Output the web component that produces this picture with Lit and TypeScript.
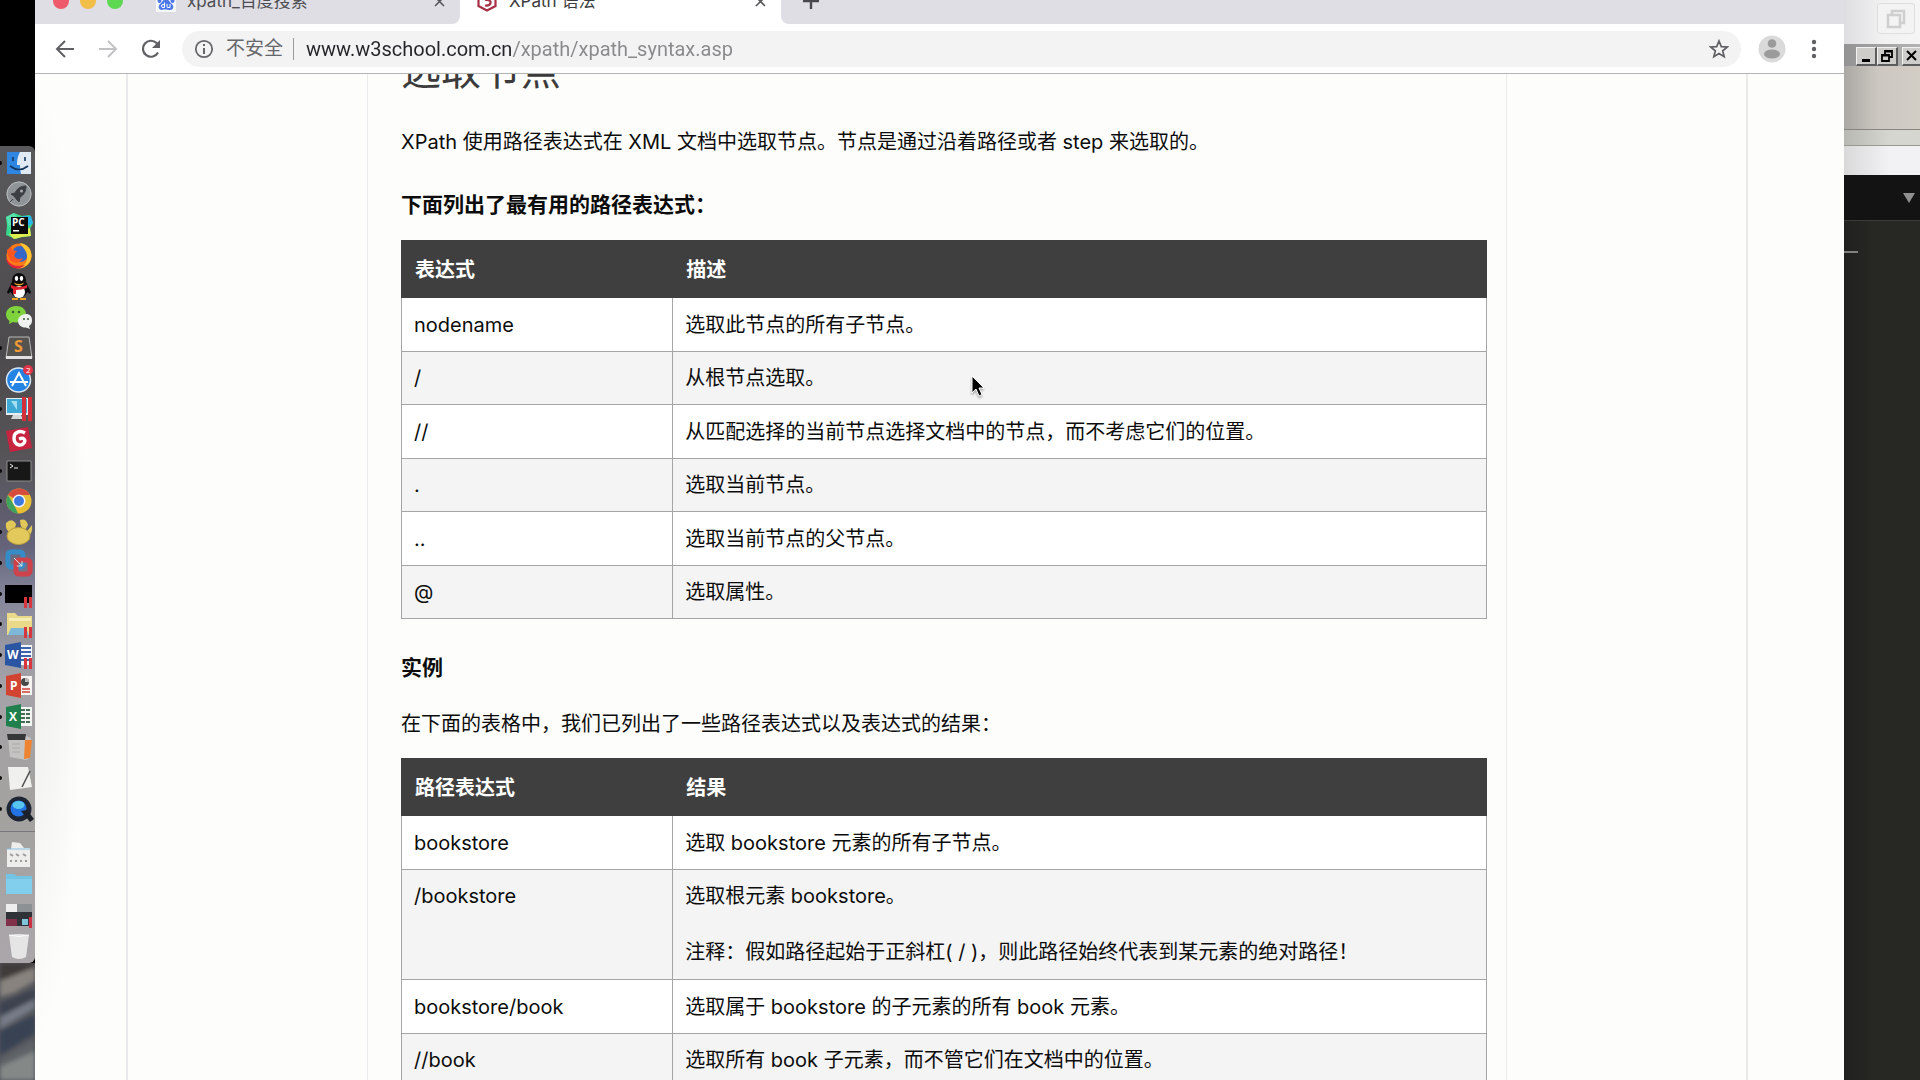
import { LitElement, html, css, svg, nothing } from "lit";
import { customElement } from "lit/decorators.js";

type Row = { expression: string; lines: string[] };

const expressionRows: Row[] = [
  { expression: "nodename", lines: ["选取此节点的所有子节点。"] },
  { expression: "/", lines: ["从根节点选取。"] },
  { expression: "//", lines: ["从匹配选择的当前节点选择文档中的节点，而不考虑它们的位置。"] },
  { expression: ".", lines: ["选取当前节点。"] },
  { expression: "..", lines: ["选取当前节点的父节点。"] },
  { expression: "@", lines: ["选取属性。"] },
];

const exampleRows: Row[] = [
  { expression: "bookstore", lines: ["选取 bookstore 元素的所有子节点。"] },
  {
    expression: "/bookstore",
    lines: ["选取根元素 bookstore。", "注释：假如路径起始于正斜杠( / )，则此路径始终代表到某元素的绝对路径！"],
  },
  { expression: "bookstore/book", lines: ["选取属于 bookstore 的子元素的所有 book 元素。"] },
  { expression: "//book", lines: ["选取所有 book 子元素，而不管它们在文档中的位置。"] },
];

const pause = svg`<path d="M20 18h3v11h-3zM25 18h3v11h-3z" fill="#d8353c"/>`;

/* Each icon is drawn in a 30 x 30 box. */
const dockIcons = [
  { name: "访达", open: true, art: svg`<path d="M3 4h24v22H3z" fill="#2f86e0"/><path d="M16 4h11v22H17c-1-4-1-7-1-9h-3c0-6 1-9 3-13z" fill="#dfeaf5"/><path d="M9 9v4M21 9v4M6 18q9 7 18 0" fill="none" stroke="#14375f" stroke-width="1.6"/>` },
  { name: "启动台", art: svg`<circle cx="15" cy="15" r="12.500" fill="#8f9499"/><circle cx="15" cy="15" r="12" fill="none" stroke="#b5b9bc"/><path d="M22 7c-6 0-9 3-11 7l-4 1 3 2 3 4 2 2 1-5c4-2 6-6 6-11zM9 20l-3 3" fill="#3c4045" stroke="#3c4045"/><circle cx="17.500" cy="12" r="1.500" fill="#a9adb0"/>` },
  { name: "PyCharm", art: svg`<path d="M2 7l8-4 8 3 8-1 3 8-3 6 1 7-9 1-7 2-9-4 1-9z" fill="#37d98c"/><path d="M2 7l8-4 4 6-9 8z" fill="#58dfae"/><path d="M18 6l9 0 2 7-4 3z" fill="#29b6e8"/><path d="M26 18l1 8-9 1-8 2-5-5z" fill="#dff04e"/><path d="M7 7h17v17H7z" fill="#0a0a0a"/><path d="M9 20h6v1.500H9z" fill="#fff"/><text x="8" y="16" font-size="10" font-weight="700" fill="#fff">PC</text>` },
  { name: "Firefox", art: svg`<circle cx="15" cy="15" r="12.500" fill="#ff7b17"/><circle cx="16" cy="13" r="8" fill="#3567c9"/><path d="M16 2c9 1 13 9 11 16-2 6-8 10-14 9 7-1 11-6 10-12 0-5-4-8-7-13z" fill="#ffc531"/><path d="M3 9l4-3 1 3 5 1-3 4c1 4 5 5 9 3-3 6-11 6-14 0-1-3-2-5-2-8z" fill="#ff571f"/><path d="M2 16c2 6 7 9 13 9l6-1c-3 3-7 4-11 3-5-2-8-6-8-11z" fill="#e2253c"/>` },
  { name: "QQ", art: svg`<ellipse cx="15" cy="17" rx="9" ry="10" fill="#0c0c0e"/><circle cx="15" cy="9" r="7" fill="#0c0c0e"/><path d="M6 15l-3 6 1 2 4-3zM24 15l3 6-1 2-4-3z" fill="#0c0c0e"/><ellipse cx="15" cy="21" rx="6" ry="6" fill="#fff"/><ellipse cx="12.500" cy="7.500" rx="1.700" ry="2.400" fill="#fff"/><ellipse cx="17.500" cy="7.500" rx="1.700" ry="2.400" fill="#fff"/><path d="M10 11.500q5 3 10 0-1 3-5 3t-5-3zM8 27h6v2H8zM16 27h6v2h-6z" fill="#f0a51e"/><path d="M7 14q8 4 16 0v3q-5 2-11 2v4H9v-5l-2-1z" fill="#e02430"/>` },
  { name: "微信", art: svg`<path d="M12 4C6 4 2 8 2 12.500c0 3 1.500 5 3.500 6.500L5 22l4-2c7 2 13-2 13-7.500S18 4 12 4z" fill="#7fd43e"/><path d="M22 12c-4 0-8 3-8 7s4 7 8 6.500l4 1.500-1-3c2-1 3-3 3-5.500 0-4-2-6.500-6-6.500z" fill="#eef1ef"/><g fill="#3d5b35"><circle cx="9" cy="10" r="1.300"/><circle cx="15" cy="10" r="1.300"/><circle cx="20" cy="17" r="1"/><circle cx="24" cy="17" r="1"/></g>` },
  { name: "Sublime Text", open: true, art: svg`<path d="M5 4h20l3 21H2z" fill="#55534f" stroke="#b9b9b9"/><path d="M2 23h26v3H2z" fill="#e1e1e1"/><text x="10" y="19" font-size="16" font-weight="700" fill="#f29a35">S</text>` },
  { name: "App Store", art: svg`<circle cx="14.500" cy="16" r="12" fill="#2484e4" stroke="#d9e7f3" stroke-width="1.500"/><path d="M8 22l7-13 7 13M6 18h18" fill="none" stroke="#fff" stroke-width="2"/><circle cx="24" cy="6" r="5" fill="#de3448"/><text x="22" y="9" font-size="8" fill="#fff">2</text>` },
  { name: "虚拟机", open: true, art: svg`<path d="M2 4h24v17H2z" fill="#e7edf0"/><path d="M3 5h20v14H3z" fill="#3fa9d5"/><path d="M7 7l6 9V7z" fill="#a3dff1"/><path d="M9 21h8l2 4H7z" fill="#d4d7d8"/><path d="M18 3h4v24h-4zM24 3h4v24h-4z" fill="#d4303a"/>` },
  { name: "网易", art: svg`<path d="M2 6l22-4 4 21-22 4z" fill="#c7253f"/><path d="M21 8c-5-3-11-1-11 5 0 7 7 9 10 5 2-3 0-6-5-4" fill="none" stroke="#fff" stroke-width="3.400"/>` },
  { name: "终端", open: true, art: svg`<path d="M3 5h24v20H3z" fill="#171717" stroke="#8c8c8c"/><path d="M6 8l3 2-3 2M10 12h4" fill="none" stroke="#eee"/>` },
  { name: "Chrome", open: true, art: svg`<circle cx="15" cy="15" r="12.500" fill="#e8be33"/><path d="M15 15L4 9a12.500 12.500 0 0 1 22 0H15z" fill="#d84c3e"/><path d="M4 9l7 12 3 6.500A12.500 12.500 0 0 1 4 9z" fill="#3ea45d"/><circle cx="15" cy="15" r="6.500" fill="#f4f4f4"/><circle cx="15" cy="15" r="5" fill="#3d79df"/>` },
  { name: "Navicat", open: true, art: svg`<path d="M2 6q6-6 10 1 0 5-7 8-4-3-3-9zM16 3q6-2 8 5l-3 5q-5-2-5-10zM28 8q1 8-4 12l-3-3z" fill="#e0c758"/><ellipse cx="14.500" cy="19" rx="11.500" ry="8.500" fill="#e3c95b" stroke="#b99e3b"/>` },
  { name: "VMware", open: true, art: svg`<rect x="4" y="4" width="15" height="15" rx="3" fill="none" stroke="#358cc6" stroke-width="5"/><rect x="12" y="12" width="14" height="14" rx="3" fill="none" stroke="#ce424b" stroke-width="5"/><path d="M10 10l8 8M18 13v5h-5" fill="none" stroke="#ddd"/>` },
  { name: "命令行", open: true, art: svg`<path d="M1 6h27v18H1z" fill="#000"/>${pause}` },
  { name: "文件资源", open: true, art: svg`<path d="M3 4h8l3 3h14v19H3z" fill="#ebd98a"/><path d="M5 9h22v3H5z" fill="#f6edb6"/><path d="M7 19h15l3 7H4z" fill="#7eb8d8"/>${pause}` },
  { name: "Word", open: true, art: svg`<path d="M14 5h14v20H14z" fill="#f3f6fb"/><path d="M16 8h11M16 12h11M16 16h11M16 20h11" stroke="#3d63ad" stroke-width="2"/><path d="M1 5l16-3v26L1 25z" fill="#2a55a2"/><text x="3" y="19" font-size="12" font-weight="700" fill="#fff">W</text>${pause}` },
  { name: "PowerPoint", open: true, art: svg`<path d="M14 5h14v19H14z" fill="#f6f3f2"/><circle cx="21" cy="11" r="4" fill="#474747"/><path d="M21 11V7a4 4 0 0 1 4 4z" fill="#bbb"/><path d="M18 18h8M18 21h8" stroke="#cf4436" stroke-width="1.500"/><path d="M2 5l15-3v25L2 24z" fill="#d24432"/><text x="6" y="19" font-size="12" font-weight="700" fill="#fff">P</text>` },
  { name: "Excel", open: true, art: svg`<path d="M14 5h14v19H14z" fill="#f2f6f3"/><path d="M17 8h9M17 12h9M17 16h9M17 20h9" stroke="#456c52" stroke-width="2" stroke-dasharray="4 1"/><path d="M2 5l15-3v25L2 24z" fill="#20804d"/><text x="5" y="19" font-size="12" font-weight="700" fill="#fff">X</text>` },
  { name: "计算器", open: true, art: svg`<path d="M4 4h18l5 2-1 20-4 2-16-3z" fill="#c4c3c1"/><path d="M21 8h7l-2 18-6 1z" fill="#ed8431"/><path d="M3 2h19l-1 6H4z" fill="#353638"/><path d="M8 12h8M8 16h8M8 20h8" stroke="#a9a8a7"/>` },
  { name: "文本编辑", open: true, art: svg`<path d="M4 4h20l4 20-22 3z" fill="#f0f0ef"/><path d="M26 8l-8 16" stroke="#4e4e50" stroke-width="1.500"/>` },
  { name: "QuickTime", open: true, art: svg`<circle cx="15" cy="15" r="12.500" fill="#1f2533"/><circle cx="14.500" cy="14.500" r="8" fill="#2473e4"/><ellipse cx="14.500" cy="11" rx="6" ry="4" fill="#57c6ef"/><path d="M17 17l9 11 4-3-7-9z" fill="#1b2029"/>` },
];

const shelfIcons = [
  { name: "文稿", art: svg`<path d="M8 3l8 1 4 5h6v19H3V10h4z" fill="#ededeb"/><path d="M3 10l23 0" stroke="#87c2df"/><path d="M6 15l3 2M12 15l3 2M19 15l3 2M6 22h2M11 22h2M16 22h2M21 22h2" stroke="#9c9c9c" stroke-width="2"/>` },
  { name: "下载", art: svg`<path d="M2 5h8l3 2h15v18H2z" fill="#74c3e5"/><path d="M2 10h26v15H2z" fill="#82cfed"/>` },
  { name: "窗口", art: svg`<path d="M2 4h26v22H2z" fill="#2f3338"/><path d="M2 4h11v8H2z" fill="#eee"/><path d="M13 4h15v8H13z" fill="#8c9293"/><path d="M2 19h11v7H2z" fill="#803149"/><path d="M18 19h6v6h-6z" fill="#7fc4d8"/><path d="M25 17h3v11h-3z" fill="#ce3045"/>` },
  { name: "废纸篓", art: svg`<path d="M5 4q10-2 20 0l-3 22q-7 4-14 0z" fill="#e5e5e6"/><path d="M5 4q10 3 20 0" fill="none" stroke="#fafafa"/>` },
];

@customElement("app-dock")
export class AppDock extends LitElement {
  static styles = css`
    :host { display: flex; flex-direction: column; background: #000; padding-top: 146px; overflow: hidden; }
    .dock {
      height: 817px;
      padding: 2px 0;
      box-sizing: border-box;
      border-radius: 0 6px 6px 0;
      display: flex;
      flex-direction: column;
      background: linear-gradient(#59585a, #4c4a4c 25%, #565457 38%, #64637a 49%, #85869a 55%, #a5a3a8 66%, #a3a29f 82%, #aaa6aa);
    }
    .item {
      flex: 1 1 0;
      min-height: 0;
      width: 100%;
      padding: 0;
      border: 0;
      background: none;
      display: flex;
      align-items: center;
      gap: 2px;
    }
    .dot { flex: none; width: 2px; height: 4px; border-radius: 0 2px 2px 0; }
    .dot.on { background: #0a0a0a; }
    .item svg { flex: none; width: 30px; height: 30px; font-family: "Open Sans", sans-serif; }
    .rule { height: 14px; display: flex; align-items: center; }
    .rule::before { content: ""; flex: 1; height: 1px; background: #77767a; }
    .wallpaper { flex: 1; width: 100%; display: block; }
  `;

  private item(icon: { name: string; open?: boolean; art: unknown }) {
    return html`<button class="item" aria-label=${icon.name}>
      <span class="dot ${icon.open ? "on" : ""}"></span>
      <svg viewBox="0 0 30 30" aria-hidden="true">${icon.art}</svg>
    </button>`;
  }

  render() {
    return html`
      <nav class="dock" aria-label="程序坞">
        ${dockIcons.map((i) => this.item(i))}
        <div class="rule"></div>
        ${shelfIcons.map((i) => this.item(i))}
      </nav>
      <svg class="wallpaper" viewBox="0 0 36 117" preserveAspectRatio="none" aria-hidden="true">
        <defs><filter id="soft"><feGaussianBlur stdDeviation="2" /></filter></defs>
        <path d="M0 0h36v117H0z" fill="#53555c" />
        <g filter="url(#soft)">
          <path d="M0 0h36v4L0 18z" fill="#3f3b3a" />
          <path d="M0 18L36 4v14L14 30 0 34z" fill="#88837e" />
          <path d="M0 40l36-14v10L0 54z" fill="#3c434f" />
          <path d="M0 54l36-18v9L0 66z" fill="#767c87" />
          <path d="M0 68l36-16v18L0 92z" fill="#394252" />
          <path d="M0 96l36-20v12L0 106z" fill="#5e6367" />
          <path d="M0 104l36-16v29H0z" fill="#848887" />
        </g>
      </svg>
    `;
  }
}

@customElement("browser-chrome")
export class BrowserChrome extends LitElement {
  static styles = css`
    :host { display: block; font-family: Inter, "Noto Sans CJK SC", sans-serif; }
    button { border: 0; padding: 0; margin: 0; background: none; display: flex; align-items: center; justify-content: center; flex: none; }
    svg { display: block; }
    .strip { height: 24px; overflow: hidden; display: flex; align-items: flex-end; background: #fff; }
    .left, .tab, .rest { height: 46px; display: flex; align-items: center; box-sizing: border-box; }
    .left { width: 425px; padding: 0 14px 0 18px; background: #dfdee4; border-radius: 0 0 8px 0; }
    .lights { display: flex; gap: 11px; margin-right: 33px; }
    .light { width: 16px; height: 16px; border-radius: 50%; }
    .red { background: #ee5a6c; }
    .yellow { background: #f3bd4a; }
    .green { background: #5ed853; }
    .title { flex: 1; font-size: 17px; line-height: 24px; color: #4d4d52; white-space: nowrap; margin-left: 11px; }
    .tab { width: 321px; padding: 0 14px 0 16px; background: #fff; }
    .tab .title { color: #3c3c40; }
    .rest { flex: 1; padding-left: 21px; background: #dfdee4; border-radius: 0 0 0 8px; }
    .bar { height: 49px; display: flex; align-items: center; background: #fff; border-bottom: 1px solid #b4b3b6; padding: 0 17px 0 16px; }
    .nav { display: flex; gap: 15px; margin-right: 17px; }
    .nav button { width: 28px; height: 28px; }
    .box { flex: 1; min-width: 0; height: 36px; border-radius: 18px; background: #f3f3f4; display: flex; align-items: center; padding: 0 12px; }
    .secure { font-size: 19px; line-height: 28px; color: #66676a; padding: 0 10px 0 12px; margin-right: 12px; border-right: 1px solid #9a9a9c; height: 22px; display: flex; align-items: center; white-space: nowrap; }
    .url {
      flex: 1;
      min-width: 0;
      height: 30px;
      border: 0;
      padding: 0;
      outline: 0;
      font: 20px/30px Roboto, sans-serif;
      color: #242528;
      -webkit-text-fill-color: transparent;
      background: linear-gradient(to right, #242528 206px, #88898b 206px);
      background-clip: text;
      -webkit-background-clip: text;
    }
    .avatar { margin: 0 15px 0 17px; }
    .more { width: 26px; height: 26px; }
  `;

  render() {
    const close = svg`<path d="M2 2l9 9M11 2l-9 9" stroke="#58585c" stroke-width="1.600" fill="none"/>`;
    return html`
      <div class="strip">
        <div class="left">
          <div class="lights">
            <button class="light red" aria-label="关闭"></button>
            <button class="light yellow" aria-label="最小化"></button>
            <button class="light green" aria-label="缩放"></button>
          </div>
          <svg width="20" height="22" viewBox="0 0 20 22" aria-hidden="true">
            <path d="M0 0h20v22H0z" fill="#f6f8fc" />
            <g fill="#4d79e8">
              <ellipse cx="3.500" cy="10" rx="2" ry="3" /><ellipse cx="7.500" cy="5" rx="2" ry="3" />
              <ellipse cx="12.500" cy="5" rx="2" ry="3" /><ellipse cx="16.500" cy="10" rx="2" ry="3" />
              <path d="M10 9c3 0 4 4 6 5 2 2 2 6-2 6-2 0-6-1-8 0-4 0-4-4-2-6 2-1 3-5 6-5z" />
            </g>
            <path d="M8.500 12.500v5H7q-1.500 0-1.500-1.500T7 14.500h1.500M11 14v2.500q0 1 1 1h2V14" fill="none" stroke="#fff" />
          </svg>
          <span class="title">xpath_百度搜索</span>
          <button aria-label="关闭标签页"><svg width="13" height="13">${close}</svg></button>
        </div>
        <div class="tab">
          <svg width="22" height="22" viewBox="0 0 22 22" aria-hidden="true">
            <path d="M11 1l8.500 4v11L11 20.500 2.500 16V5z" fill="none" stroke="#a92f47" stroke-width="2.200" />
            <path d="M7 6.500h7L11 10q4 0 3.500 3T9 15.500" fill="none" stroke="#a92f47" stroke-width="2.200" />
          </svg>
          <span class="title">XPath 语法</span>
          <button aria-label="关闭标签页"><svg width="13" height="13">${close}</svg></button>
        </div>
        <div class="rest">
          <button aria-label="新标签页"><svg width="18" height="18"><path d="M9 1v16M1 9h16" stroke="#48484c" stroke-width="2.400" /></svg></button>
        </div>
      </div>
      <div class="bar">
        <div class="nav">
          <button aria-label="后退"><svg width="20" height="20"><path d="M19 10H2M10 2L2 10l8 8" fill="none" stroke="#5f6063" stroke-width="2" /></svg></button>
          <button aria-label="前进" disabled><svg width="20" height="20"><path d="M1 10h17M10 2l8 8-8 8" fill="none" stroke="#c2c2c4" stroke-width="2" /></svg></button>
          <button aria-label="重新加载"><svg width="20" height="20"><path d="M17 13.500A8 8 0 1 1 15.500 4L17 5.500" fill="none" stroke="#5f6063" stroke-width="2.200" /><path d="M19 1v8h-8z" fill="#5f6063" /></svg></button>
        </div>
        <div class="box">
          <svg width="20" height="20" aria-hidden="true"><circle cx="10" cy="10" r="8.200" fill="none" stroke="#66676a" stroke-width="1.800" /><path d="M9 9h2v6H9zM9 5h2v2H9z" fill="#66676a" /></svg>
          <label class="secure" for="url">不安全</label>
          <input class="url" id="url" type="text" .value=${"www.w3school.com.cn/xpath/xpath_syntax.asp"} />
          <button aria-label="收藏"><svg width="20" height="20"><path d="M10 2l2.300 5.600 6 .4-4.600 3.900 1.500 5.900L10 14.600l-5.200 3.200 1.500-5.900L1.700 8l6-.4z" fill="none" stroke="#5f6063" stroke-width="1.700" /></svg></button>
        </div>
        <button class="avatar" aria-label="用户"><svg width="28" height="28"><circle cx="14" cy="14" r="13.500" fill="#dadadb" /><circle cx="14" cy="8.500" r="4.300" fill="#9b9b9c" /><ellipse cx="14" cy="19" rx="8" ry="4.500" fill="#9b9b9c" /></svg></button>
        <button class="more" aria-label="更多"><svg width="6" height="20"><circle cx="3" cy="3" r="2.200" fill="#5f6063" /><circle cx="3" cy="10" r="2.200" fill="#5f6063" /><circle cx="3" cy="17" r="2.200" fill="#5f6063" /></svg></button>
      </div>
    `;
  }
}

@customElement("tutorial-page")
export class TutorialPage extends LitElement {
  static styles = css`
    :host {
      display: flex;
      overflow: hidden;
      padding: 0 96px 0 91px;
      background: radial-gradient(ellipse 50px 480px at 0 490px, #efefee, #f5f5f4 50%, rgb(253 254 250 / 0)), #fdfefb;
      font-family: Inter, "Noto Sans CJK SC", sans-serif;
      color: #0c0c0c;
    }
    .sheet { flex: 1; min-width: 0; display: grid; grid-template-columns: 239px minmax(0, 1fr) 239px; border: solid #e9e9ec; border-width: 0 2px; }
    .main { grid-column: 2; border: solid #ebebed; border-width: 0 1px; padding: 0 19px 0 33px; }
    h2 { margin: -34px 0 23px; font-family: "Noto Sans CJK SC", sans-serif; font-size: 40px; line-height: 56px; font-weight: 400; color: #3b3b3b; }
    p { margin: 0; font-size: 20px; line-height: 30px; }
    .lead { padding-top: 8px; }
    h3 { margin: 0; font-size: 21px; line-height: 30px; font-weight: 700; }
    .first { padding: 33px 0 20px; }
    .second { padding: 34px 0 26px; }
    .intro { padding-bottom: 19px; }
    table { width: 100%; table-layout: fixed; border-collapse: collapse; background: #fff; }
    th, td { text-align: left; vertical-align: top; font-size: 20px; line-height: 30px; box-sizing: border-box; }
    th { width: 25%; background: #3f3f3f; color: #fff; border: 1px solid #3f3f3f; padding: 14px 13px 12px; font-weight: 700; }
    th + th { width: auto; }
    td { border: 1px solid #a5a5a5; padding: 12px 12px 11px; }
    tbody tr:nth-child(even) td { background: #f4f4f4; padding-top: 11px; }
    tbody tr.note td { padding-bottom: 12px; }
    td p + p { margin-top: 26px; }
  `;

  private table(headings: string[], rows: Row[]) {
    return html`<table>
      <thead><tr>${headings.map((h) => html`<th scope="col">${h}</th>`)}</tr></thead>
      <tbody>
        ${rows.map(
          (r) => html`<tr class=${r.lines.length > 1 ? "note" : nothing}>
            <td>${r.expression}</td>
            <td>${r.lines.map((l) => html`<p>${l}</p>`)}</td>
          </tr>`,
        )}
      </tbody>
    </table>`;
  }

  render() {
    return html`<div class="sheet">
      <main class="main">
        <h2>选取节点</h2>
        <p class="lead">XPath 使用路径表达式在 XML 文档中选取节点。节点是通过沿着路径或者 step 来选取的。</p>
        <h3 class="first">下面列出了最有用的路径表达式：</h3>
        ${this.table(["表达式", "描述"], expressionRows)}
        <h3 class="second">实例</h3>
        <p class="intro">在下面的表格中，我们已列出了一些路径表达式以及表达式的结果：</p>
        ${this.table(["路径表达式", "结果"], exampleRows)}
      </main>
    </div>`;
  }
}

@customElement("background-windows")
export class BackgroundWindows extends LitElement {
  static styles = css`
    :host { display: flex; flex-direction: column; overflow: hidden; background: #262723; }
    button { padding: 0; border: 0; background: none; flex: none; display: flex; align-items: center; justify-content: center; box-sizing: border-box; }
    .top { height: 44px; background: linear-gradient(to right, #dedddf, #f2f1f2 50%, #f6f5f5); display: flex; justify-content: flex-end; padding: 3px 5px 10px 0; box-sizing: border-box; }
    .top button { width: 38px; border: 1px solid #dededf; border-radius: 3px; background: #f4f3f4; }
    .caption { height: 22px; background: linear-gradient(to right, #939393, #b4b4b4); display: flex; padding: 3px 0 0 12px; box-sizing: border-box; }
    .caption button { width: 21px; height: 19px; background: #cfcdca; border: solid; border-width: 1px 2px 2px 1px; border-color: #f1f1f1 #5c5c5c #5c5c5c #f1f1f1; }
    .caption .x { margin-left: 4px; }
    .menu { height: 63px; background: linear-gradient(to right, #aaa8a4, #ccc8c1 45%, #d2cec6); border-bottom: 1px solid #87857f; }
    .tools { height: 15px; background: linear-gradient(to right, #b8b8b3, #d5d6d0 60%); border-bottom: 1px solid #999994; }
    .pane { height: 29px; background: linear-gradient(to right, #d9d9da, #f2f2f4 60%); }
    .tabs { height: 45px; background: #131313; border-bottom: 1px solid #3b3b38; display: flex; justify-content: flex-end; padding-right: 5px; }
    .code { flex: 1; padding-top: 30px; background: linear-gradient(to right, #20211e, #272824 40%); }
    .code::before { content: ""; display: block; width: 14px; height: 2px; background: #80817c; }
  `;

  render() {
    return html`
      <div class="top"><button aria-label="还原窗口"><svg width="20" height="20"><path d="M2 6h12v12H2zM6 6V2h12v12h-4" fill="none" stroke="#cfcfd0" stroke-width="2.500" /></svg></button></div>
      <div class="caption">
        <button aria-label="最小化"><svg width="16" height="14"><path d="M4 10h8v3H4z" /></svg></button>
        <button aria-label="还原"><svg width="16" height="14"><path d="M3 6h7v6H3zM3 6.500h7M6 5V2h7v6h-3M6 2.500h7" fill="none" stroke="#000" stroke-width="1.800" /></svg></button>
        <button class="x" aria-label="关闭"><svg width="16" height="14"><path d="M3 2l9 9M12 2l-9 9" stroke="#000" stroke-width="2" /></svg></button>
      </div>
      <div class="menu"></div>
      <div class="tools"></div>
      <div class="pane"></div>
      <div class="tabs"><button aria-label="标签列表"><svg width="12" height="10"><path d="M0 0h12L6 10z" fill="#8f8f8f" /></svg></button></div>
      <div class="code"></div>
    `;
  }
}

@customElement("app-root")
export class AppRoot extends LitElement {
  static styles = css`
    :host { display: grid; grid-template-columns: 35px minmax(0, 1fr) 76px; height: 100vh; overflow: hidden; position: relative; }
    .window { display: flex; flex-direction: column; min-width: 0; min-height: 0; background: #fff; }
    tutorial-page { flex: 1; min-height: 0; }
    app-dock, background-windows { min-height: 0; }
    .pointer { position: absolute; left: 970px; top: 374px; filter: drop-shadow(0 2px 1px rgb(0 0 0 / 0.3)); }
  `;

  render() {
    return html`
      <app-dock></app-dock>
      <div class="window">
        <browser-chrome></browser-chrome>
        <tutorial-page></tutorial-page>
      </div>
      <background-windows></background-windows>
      <svg class="pointer" width="16" height="24" viewBox="0 0 16 24" aria-hidden="true">
        <path d="M2 2v17l4-4 3 7 3-1.500-3-6.500h5z" fill="#000" stroke="#fff" />
      </svg>
    `;
  }
}
